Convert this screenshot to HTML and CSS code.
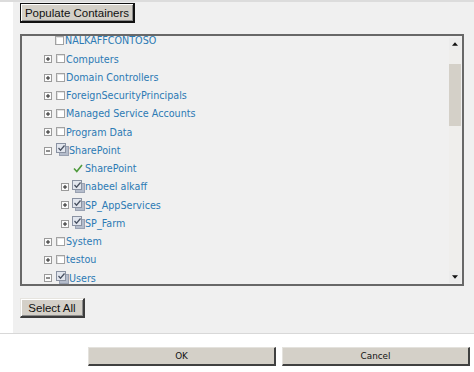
FILE: index.html
```html
<!DOCTYPE html>
<html>
<head>
<meta charset="utf-8">
<link rel="stylesheet" href="styles.css">
</head>
<body>
<div class="top-strip"></div>
<div class="panel">
  <button class="btn btn-default">Populate Containers</button>
  <div class="treebox">
    <div class="tree-view">
      <div class="tree">
        <div class="row lv0"><span class="cb"></span><span class="lbl">NALKAFFCONTOSO</span></div>
        <div class="row lv1"><svg class="exp" viewBox="0 0 8 8"><rect x=".5" y=".5" width="7" height="7" fill="#fbfbfb" stroke="#9a9a9a"/><path d="M2 4h4M4 2v4" stroke="#222" stroke-width="1"/></svg><span class="cb"></span><span class="lbl">Computers</span></div>
        <div class="row lv1"><svg class="exp" viewBox="0 0 8 8"><rect x=".5" y=".5" width="7" height="7" fill="#fbfbfb" stroke="#9a9a9a"/><path d="M2 4h4M4 2v4" stroke="#222" stroke-width="1"/></svg><span class="cb"></span><span class="lbl">Domain Controllers</span></div>
        <div class="row lv1"><svg class="exp" viewBox="0 0 8 8"><rect x=".5" y=".5" width="7" height="7" fill="#fbfbfb" stroke="#9a9a9a"/><path d="M2 4h4M4 2v4" stroke="#222" stroke-width="1"/></svg><span class="cb"></span><span class="lbl">ForeignSecurityPrincipals</span></div>
        <div class="row lv1"><svg class="exp" viewBox="0 0 8 8"><rect x=".5" y=".5" width="7" height="7" fill="#fbfbfb" stroke="#9a9a9a"/><path d="M2 4h4M4 2v4" stroke="#222" stroke-width="1"/></svg><span class="cb"></span><span class="lbl">Managed Service Accounts</span></div>
        <div class="row lv1"><svg class="exp" viewBox="0 0 8 8"><rect x=".5" y=".5" width="7" height="7" fill="#fbfbfb" stroke="#9a9a9a"/><path d="M2 4h4M4 2v4" stroke="#222" stroke-width="1"/></svg><span class="cb"></span><span class="lbl">Program Data</span></div>
        <div class="row lv1"><svg class="exp" viewBox="0 0 8 8"><rect x=".5" y=".5" width="7" height="7" fill="#fbfbfb" stroke="#9a9a9a"/><path d="M2 4h4" stroke="#222" stroke-width="1"/></svg><svg class="cbx" viewBox="0 0 13 13"><rect x="3.5" y="3.5" width="9" height="9" fill="#b4bccb" stroke="#9aa2b2"/><rect x=".5" y=".5" width="9" height="9" fill="#e2e6ee" stroke="#8a92a2"/><path d="M2.5 5l2 2.2L8.5 2.5" fill="none" stroke="#4a5262" stroke-width="1.3"/></svg><span class="lbl">SharePoint</span></div>
        <div class="row lv2c"><svg class="chk" viewBox="0 0 10 9"><path d="M1 4.5l2.8 3L9 1" fill="none" stroke="#4f9a3c" stroke-width="1.6"/></svg><span class="lbl">SharePoint</span></div>
        <div class="row lv2"><svg class="exp" viewBox="0 0 8 8"><rect x=".5" y=".5" width="7" height="7" fill="#fbfbfb" stroke="#9a9a9a"/><path d="M2 4h4M4 2v4" stroke="#222" stroke-width="1"/></svg><svg class="cbx" viewBox="0 0 13 13"><rect x="3.5" y="3.5" width="9" height="9" fill="#b4bccb" stroke="#9aa2b2"/><rect x=".5" y=".5" width="9" height="9" fill="#e2e6ee" stroke="#8a92a2"/><path d="M2.5 5l2 2.2L8.5 2.5" fill="none" stroke="#4a5262" stroke-width="1.3"/></svg><span class="lbl">nabeel alkaff</span></div>
        <div class="row lv2"><svg class="exp" viewBox="0 0 8 8"><rect x=".5" y=".5" width="7" height="7" fill="#fbfbfb" stroke="#9a9a9a"/><path d="M2 4h4M4 2v4" stroke="#222" stroke-width="1"/></svg><svg class="cbx" viewBox="0 0 13 13"><rect x="3.5" y="3.5" width="9" height="9" fill="#b4bccb" stroke="#9aa2b2"/><rect x=".5" y=".5" width="9" height="9" fill="#e2e6ee" stroke="#8a92a2"/><path d="M2.5 5l2 2.2L8.5 2.5" fill="none" stroke="#4a5262" stroke-width="1.3"/></svg><span class="lbl">SP_AppServices</span></div>
        <div class="row lv2"><svg class="exp" viewBox="0 0 8 8"><rect x=".5" y=".5" width="7" height="7" fill="#fbfbfb" stroke="#9a9a9a"/><path d="M2 4h4M4 2v4" stroke="#222" stroke-width="1"/></svg><svg class="cbx" viewBox="0 0 13 13"><rect x="3.5" y="3.5" width="9" height="9" fill="#b4bccb" stroke="#9aa2b2"/><rect x=".5" y=".5" width="9" height="9" fill="#e2e6ee" stroke="#8a92a2"/><path d="M2.5 5l2 2.2L8.5 2.5" fill="none" stroke="#4a5262" stroke-width="1.3"/></svg><span class="lbl">SP_Farm</span></div>
        <div class="row lv1"><svg class="exp" viewBox="0 0 8 8"><rect x=".5" y=".5" width="7" height="7" fill="#fbfbfb" stroke="#9a9a9a"/><path d="M2 4h4M4 2v4" stroke="#222" stroke-width="1"/></svg><span class="cb"></span><span class="lbl">System</span></div>
        <div class="row lv1"><svg class="exp" viewBox="0 0 8 8"><rect x=".5" y=".5" width="7" height="7" fill="#fbfbfb" stroke="#9a9a9a"/><path d="M2 4h4M4 2v4" stroke="#222" stroke-width="1"/></svg><span class="cb"></span><span class="lbl">testou</span></div>
        <div class="row lv1"><svg class="exp" viewBox="0 0 8 8"><rect x=".5" y=".5" width="7" height="7" fill="#fbfbfb" stroke="#9a9a9a"/><path d="M2 4h4" stroke="#222" stroke-width="1"/></svg><svg class="cbx" viewBox="0 0 13 13"><rect x="3.5" y="3.5" width="9" height="9" fill="#b4bccb" stroke="#9aa2b2"/><rect x=".5" y=".5" width="9" height="9" fill="#e2e6ee" stroke="#8a92a2"/><path d="M2.5 5l2 2.2L8.5 2.5" fill="none" stroke="#4a5262" stroke-width="1.3"/></svg><span class="lbl">Users</span></div>
      </div>
    </div>
    <div class="scrollbar">
      <div class="sb-btn"><svg viewBox="0 0 7 4" class="arrow"><path d="M0 4L3.5 0L7 4z" fill="#111"/></svg></div>
      <div class="sb-track"><div class="sb-thumb"></div></div>
      <div class="sb-btn"><svg viewBox="0 0 7 4" class="arrow"><path d="M0 0L3.5 4L7 0z" fill="#111"/></svg></div>
    </div>
  </div>
  <button class="btn btn-plain">Select All</button>
</div>
<div class="footer">
  <button class="dlg-btn">OK</button>
  <button class="dlg-btn">Cancel</button>
</div>
</body>
</html>
```
FILE: styles.css
```css
html, body {
  margin: 0;
  padding: 0;
  background: #ffffff;
}
body {
  width: 474px;
  height: 372px;
  overflow: hidden;
  font-family: "DejaVu Sans", Verdana, sans-serif;
}
.top-strip {
  height: 2px;
  background: #dcdcdc;
}
.panel {
  margin-left: 13px;
  height: 331px;
  box-sizing: border-box;
  background: #f0f0f0;
  padding: 1px 0 0 7px;
  display: flex;
  flex-direction: column;
  align-items: flex-start;
}
.btn {
  font-family: "Liberation Sans", Arial, sans-serif;
  font-size: 11.5px;
  color: #111;
  background: #d4d0c8;
  padding: 0;
  margin: 0;
  box-sizing: border-box;
}
.btn-default {
  width: 115px;
  height: 20px;
  border: 1px solid #111;
  border-right-width: 2px;
  border-bottom-width: 2px;
  box-shadow: inset 1px 1px #ffffff, inset -1px -1px #8a8a8a;
}
.btn-plain {
  margin-top: 12px;
  width: 65px;
  height: 20px;
  border: 1px solid #e6e4df;
  border-right: 2px solid #3c3c3c;
  border-bottom: 2px solid #3c3c3c;
  box-shadow: inset 1px 1px #ffffff, inset -1px -1px #8a8a8a;
}
.treebox {
  margin-top: 11px;
  width: 444px;
  height: 252px;
  box-sizing: border-box;
  border: 2px solid #686868;
  background: #f0f0f0;
  display: flex;
}
.tree-view {
  flex: 1;
  overflow: hidden;
}
.tree {
  margin-top: -4px;
}
.row {
  display: flex;
  align-items: center;
  height: 18.25px;
  white-space: nowrap;
}
.lbl {
  font-size: 9.6px;
  color: #2c7ab4;
  line-height: 1;
}
.lv0 { padding-left: 33px; }
.lv1 { padding-left: 22px; }
.lv2 { padding-left: 39px; }
.lv2c { padding-left: 51px; }
.exp {
  width: 8px;
  height: 8px;
  flex: none;
}
.lv1 .exp { margin-right: 4px; }
.lv2 .exp { margin-right: 3px; }
.cb {
  width: 7px;
  height: 7px;
  flex: none;
  border: 1px solid #a2a2a2;
  background: #ffffff;
  box-shadow: inset 1px 1px #e2e2e2;
  margin-right: 1px;
  margin-top: -1px;
}
.cbx {
  width: 13px;
  height: 13px;
  flex: none;
  margin-top: -2px;
}
.chk {
  width: 10px;
  height: 9px;
  flex: none;
  margin-right: 2px;
}
.scrollbar {
  width: 12px;
  margin-right: 1px;
  display: flex;
  flex-direction: column;
  padding-top: 2px;
  padding-bottom: 1px;
  box-sizing: border-box;
}
.sb-btn {
  height: 12px;
  flex: none;
  background: #ececec;
  display: flex;
  align-items: center;
  justify-content: center;
}
.arrow {
  width: 6px;
  height: 4px;
}
.sb-track {
  flex: 1;
  background: #efeeec;
  padding-top: 14px;
}
.sb-thumb {
  height: 62px;
  background: #d4d0c8;
}
.footer {
  border-top: 1px solid #d8d8d8;
  padding: 13px 0 0 88px;
  display: flex;
  gap: 6px;
}
.dlg-btn {
  width: 188px;
  height: 19px;
  margin: 0;
  padding: 0;
  box-sizing: border-box;
  background: #d4d0c8;
  border: 1px solid #e4e2dd;
  border-right: 2px solid #404040;
  border-bottom: 2px solid #404040;
  font-family: "DejaVu Sans", Tahoma, sans-serif;
  font-size: 8.8px;
  color: #111;
}
```
